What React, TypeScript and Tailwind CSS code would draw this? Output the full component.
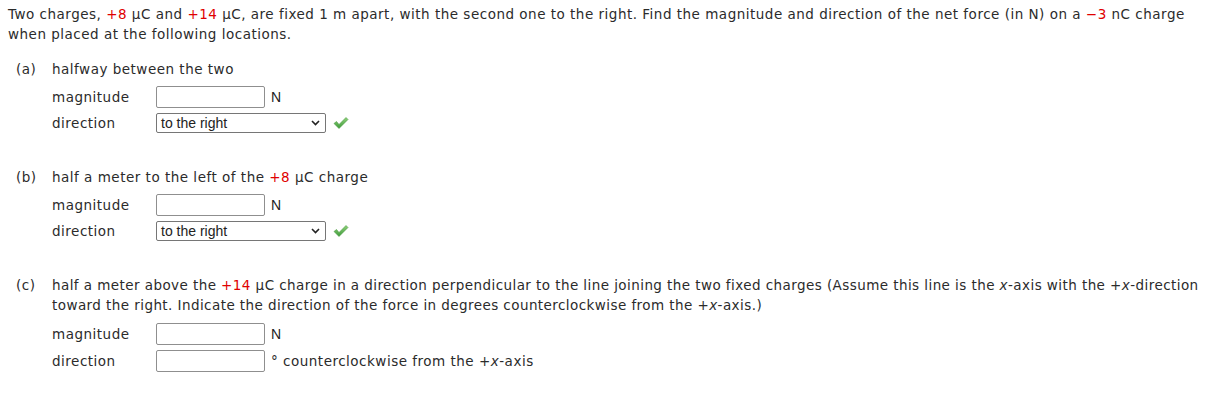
import React from "react";

const red = "text-[#e00000]";

function Check() {
  return (
    <svg width="16" height="14" viewBox="0 0 16 14" className="ml-[7px]">
      <defs>
        <linearGradient id="g" x1="0" y1="0" x2="0" y2="1">
          <stop offset="0" stopColor="#8fd17a" />
          <stop offset="1" stopColor="#3e9a3a" />
        </linearGradient>
      </defs>
      <path d="M1 7.5 L3.5 5.5 L6 8.5 L13 1.5 L15 3.5 L6 12.5 Z" fill="url(#g)" stroke="#4a9a40" strokeWidth="0.6" strokeLinejoin="round" />
    </svg>
  );
}

function TextBox() {
  return (
    <div className="w-[109px] h-[22px] border border-[#8f8f8f] rounded-[2px] bg-white shrink-0" />
  );
}

function SelectBox() {
  return (
    <div className="flex items-center">
      <div className="relative w-[170px] h-[20px] border border-[#767676] rounded-[2px] bg-white flex items-center">
        <span className="pl-[4px] text-[14px] tracking-normal text-[#222] font-['Liberation_Sans',Arial,sans-serif] leading-none">to the right</span>
        <svg className="absolute right-[5px] top-[6px]" width="9" height="6" viewBox="0 0 9 6">
          <path d="M1 1 L4.5 4.5 L8 1" fill="none" stroke="#222" strokeWidth="1.6" />
        </svg>
      </div>
      <Check />
    </div>
  );
}

function Row({ label, children, h = "h-[26px]" }: { label: string; children: React.ReactNode; h?: string }) {
  return (
    <div className={`flex items-center ${h}`}>
      <div className="w-[104px] shrink-0">{label}</div>
      {children}
    </div>
  );
}

function Unit({ children }: { children: React.ReactNode }) {
  return <span className="ml-[6px] text-[14px] tracking-normal font-['Liberation_Sans',Arial,sans-serif] text-[#222]">{children}</span>;
}

function Part({ tag, children }: { tag: string; children: React.ReactNode }) {
  return (
    <div className="flex pl-[16px]">
      <div className="w-[36px] shrink-0">{tag}</div>
      <div className="flex-1">{children}</div>
    </div>
  );
}

export default function App() {
  return (
    <div className="w-[1210px] h-[411px] bg-white text-[#2b2b2b] text-[13.5px] tracking-[0.5px] leading-[20px] font-['DejaVu_Sans',Verdana,sans-serif] overflow-hidden">
      <div className="pt-[4px] pl-[8px] whitespace-nowrap">
        Two charges, <span className={red}>+8</span> μC and <span className={red}>+14</span> μC, are fixed 1 m apart, with the second one to the right. Find the magnitude and direction of the net force (in N) on a <span className={red}>−3</span> nC charge
        <br />
        when placed at the following locations.
      </div>

      <div className="mt-[15px]">
        <Part tag="(a)">
          <div>halfway between the two</div>
          <div className="mt-[5px]">
            <Row label="magnitude">
              <TextBox />
              <Unit>N</Unit>
            </Row>
            <Row label="direction">
              <SelectBox />
            </Row>
          </div>
        </Part>
      </div>

      <div className="mt-[31px]">
        <Part tag="(b)">
          <div>
            half a meter to the left of the <span className={red}>+8</span> μC charge
          </div>
          <div className="mt-[5px]">
            <Row label="magnitude">
              <TextBox />
              <Unit>N</Unit>
            </Row>
            <Row label="direction">
              <SelectBox />
            </Row>
          </div>
        </Part>
      </div>

      <div className="mt-[31px]">
        <Part tag="(c)">
          <div className="whitespace-nowrap tracking-[0.43px]">
            half a meter above the <span className={red}>+14</span> μC charge in a direction perpendicular to the line joining the two fixed charges (Assume this line is the <i>x</i>-axis with the +<i>x</i>-direction
            <br />
            toward the right. Indicate the direction of the force in degrees counterclockwise from the +<i>x</i>-axis.)
          </div>
          <div className="mt-[5px]">
            <Row label="magnitude" h="h-[27px]">
              <TextBox />
              <Unit>N</Unit>
            </Row>
            <Row label="direction" h="h-[27px]">
              <TextBox />
              <span className="ml-[6px]">
                ° counterclockwise from the +<i>x</i>-axis
              </span>
            </Row>
          </div>
        </Part>
      </div>
    </div>
  );
}
